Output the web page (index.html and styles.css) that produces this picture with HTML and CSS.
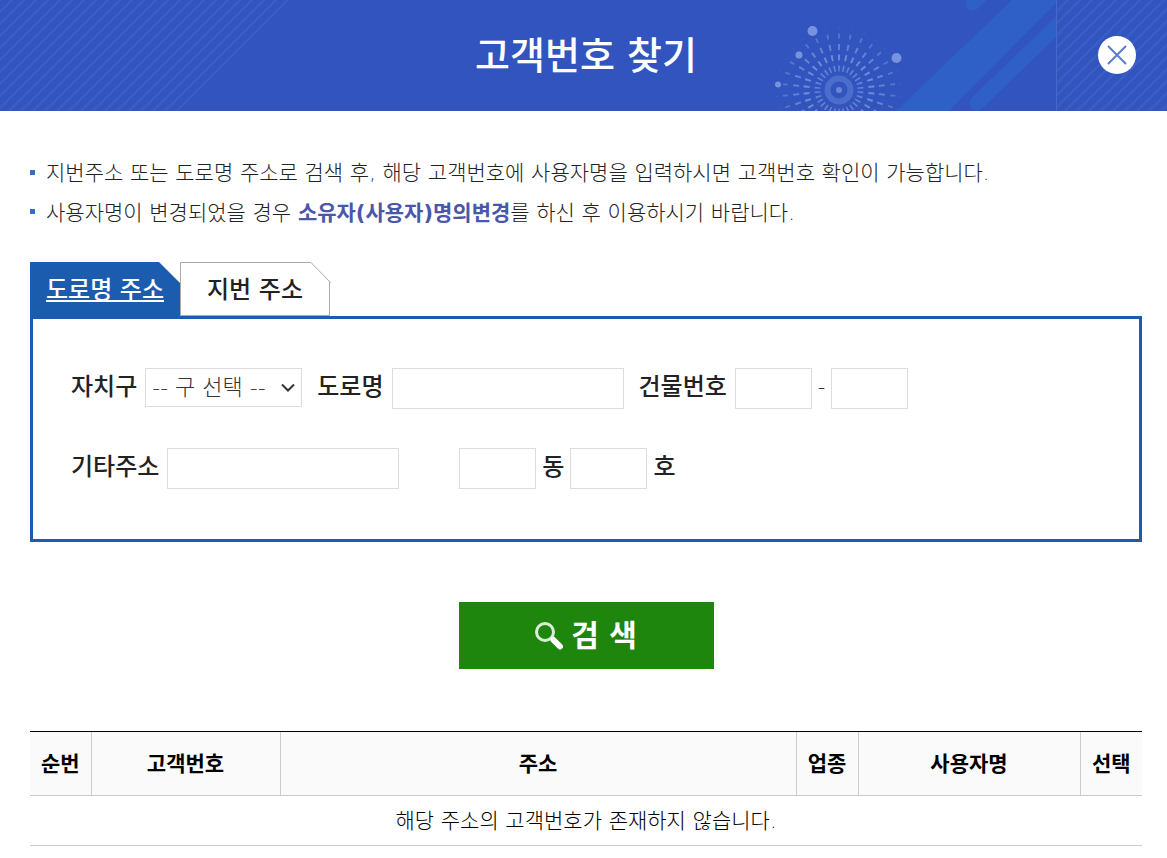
FILE: index.html
```html
<!DOCTYPE html>
<html lang="ko">
<head>
<meta charset="utf-8">
<title>고객번호 찾기</title>
<link rel="stylesheet" href="styles.css">
</head>
<body>
<header class="banner">
  <svg class="art art-left" width="300" height="111" viewBox="0 0 300 111" aria-hidden="true">
    <defs>
      <pattern id="stripes" width="12" height="12" patternUnits="userSpaceOnUse">
        <path d="M-3 3L3 -3M-3 15L15 -3M9 15L15 9" stroke="#395dc4" stroke-width="2.500"/>
      </pattern>
    </defs>
    <path d="M0 0H289L178 111H0z" fill="url(#stripes)"/>
  </svg>
  <svg class="art art-right" width="427" height="111" viewBox="740 0 427 111" aria-hidden="true">
    <path d="M1012 0H1056V3L949 111H896z" fill="#2f60c8"/>
    <path d="M977 103L1066 17M973 3L985 -9" stroke="#2f60c8" stroke-width="15" stroke-linecap="round"/>
    <path d="M1057 0H1167V111H1057z" fill="#3154be"/>
    <path d="M1057 0H1167V111H1057z" fill="url(#stripes)"/>
    <path d="M1056.500 0V111" stroke="#4469c9"/>
    <g fill="none" stroke="#7c97dd" transform="rotate(-90 839 90)">
      <circle cx="839" cy="90" r="11.500" stroke-width="6" stroke="#4b6dcb"/>
      <circle cx="839" cy="90" r="21.500" stroke-width="6" pathLength="300" stroke-dasharray="3.500 6.500" stroke-dashoffset="1.750" opacity=".7"/>
      <circle cx="839" cy="90" r="32.500" stroke-width="6" pathLength="300" stroke-dasharray="3 7" stroke-dashoffset="1.500" opacity=".8"/>
      <circle cx="839" cy="90" r="43" stroke-width="6" pathLength="300" stroke-dasharray="2.200 7.800" stroke-dashoffset="1.100" opacity=".7"/>
      <circle cx="839" cy="90" r="54" stroke-width="5" pathLength="300" stroke-dasharray="1.700 8.300" stroke-dashoffset=".85" opacity=".5"/>
      <circle cx="839" cy="90" r="62" stroke-width="3" pathLength="300" stroke-dasharray="1 9" stroke-dashoffset=".5" opacity=".12"/>
    </g>
    <g fill="#7893de">
      <circle cx="839" cy="90" r="3" fill="#6885d6"/>
      <circle cx="812.500" cy="31" r="5"/>
      <circle cx="799" cy="55" r="3.500"/>
      <circle cx="896.500" cy="58" r="5"/>
      <circle cx="778" cy="84.500" r="3"/>
    </g>
  </svg>
  <h1 class="title">고객번호 찾기</h1>
  <button class="close" type="button" aria-label="닫기">
    <svg width="38" height="38" viewBox="0 0 38 38" aria-hidden="true"><path d="M10 10L28 28M28 10L10 28" stroke="#5b7cc6" stroke-width="2"/></svg>
  </button>
</header>

<main class="content">
  <ul class="notes">
    <li>지번주소 또는 도로명 주소로 검색 후, 해당 고객번호에 사용자명을 입력하시면 고객번호 확인이 가능합니다.</li>
    <li>사용자명이 변경되었을 경우 <strong>소유자(사용자)명의변경</strong>를 하신 후 이용하시기 바랍니다.</li>
  </ul>

  <nav class="tabs">
    <a class="tab tab-active" href="#road">도로명 주소</a>
    <a class="tab tab-plain" href="#lot">
      <svg class="tab-shape" width="151" height="54" viewBox="0 0 151 54" aria-hidden="true"><path d="M.5 54V.5H131L150.500 20.500H149.500V53.500H.5" fill="#fff" stroke="#aaa"/></svg>
      <span class="tab-text">지번 주소</span>
    </a>
  </nav>

  <form class="search" id="road">
    <div class="panel">
      <div class="row">
        <div class="field">
          <label for="gu">자치구</label>
          <span class="select-box">
            <select id="gu"><option>-- 구 선택 --</option></select>
            <svg class="chevron" width="14" height="10" viewBox="0 0 14 10" aria-hidden="true"><path d="M1 1.500L7 7.500L13 1.500" fill="none" stroke="#333" stroke-width="2"/></svg>
          </span>
        </div>
        <div class="field">
          <label for="street">도로명</label>
          <input class="wide" id="street" type="text">
        </div>
        <div class="field">
          <label for="bldg">건물번호</label>
          <input class="short" id="bldg" type="text">
          <span class="dash">-</span>
          <input class="short" type="text" aria-label="건물번호 부번">
        </div>
      </div>
      <div class="row row-etc">
        <div class="field">
          <label for="etc">기타주소</label>
          <input class="wide" id="etc" type="text">
        </div>
        <div class="field">
          <input class="short" id="dong" type="text">
          <label for="dong">동</label>
          <input class="short" id="ho" type="text">
          <label for="ho">호</label>
        </div>
      </div>
    </div>
    <button class="submit" type="button">
      <svg width="28" height="28" viewBox="0 0 28 28" aria-hidden="true">
        <circle cx="10" cy="10" r="8.500" fill="none" stroke="#d9efd5" stroke-width="3"/>
        <path d="M15.500 15.500L19 19" stroke="#d9efd5" stroke-width="3"/>
        <path d="M18.500 18L25 24.500" stroke="#fff" stroke-width="6" stroke-linecap="round"/>
      </svg>
      <span class="submit-text">검 색</span>
    </button>
  </form>

  <table class="results">
    <colgroup><col class="c-no"><col class="c-id"><col><col class="c-type"><col class="c-user"><col class="c-pick"></colgroup>
    <thead>
      <tr><th>순번</th><th>고객번호</th><th>주소</th><th>업종</th><th>사용자명</th><th>선택</th></tr>
    </thead>
    <tbody>
      <tr><td colspan="6">해당 주소의 고객번호가 존재하지 않습니다.</td></tr>
    </tbody>
  </table>
</main>
</body>
</html>
```
FILE: styles.css
```css
* { box-sizing: border-box; }

body {
  margin: 0;
  background: #fff;
  color: #222;
  font-family: "DejaVu Sans", "Noto Sans CJK KR", sans-serif;
  font-size: 21px;
  font-weight: 300;
}

button, input, select { font: inherit; margin: 0; }

.banner {
  position: relative;
  display: flex;
  align-items: center;
  justify-content: center;
  height: 111px;
  padding-left: 5px;
  background: #3154be;
  overflow: hidden;
}
.art { position: absolute; top: 0; }
.art-left { left: 0; }
.art-right { right: 0; }
.title {
  position: relative;
  margin: 0;
  color: #fff;
  font-size: 38px;
  font-weight: 500;
  line-height: 54px;
}
.close {
  position: absolute;
  top: 36px;
  right: 31px;
  width: 38px;
  height: 38px;
  padding: 0;
  border: 0;
  border-radius: 50%;
  background: #fff;
}
.close svg { display: block; }

.content { padding: 43px 25px 12px 30px; }

.notes { margin: 0 0 29px; padding: 0; list-style: none; }
.notes li {
  padding-left: 16px;
  line-height: 39px;
  background: linear-gradient(#2f70c4, #2f70c4) 0 16px / 5px 5px no-repeat;
}
.notes li + li { padding-top: 1px; }
.notes strong { color: #4a56a8; font-weight: 700; }

.tabs { display: flex; }
.tab {
  position: relative;
  width: 150px;
  height: 54px;
  font-size: 24px;
  font-weight: 500;
  line-height: 56px;
  text-align: center;
  white-space: nowrap;
}
.tab-active {
  color: #fff;
  background: #1c5cae;
  clip-path: polygon(0 0, 129px 0, 100% 21px, 100% 100%, 0 100%);
}
.tab-plain { color: #222; text-decoration: none; }
.tab-shape { position: absolute; top: 0; left: 0; }
.tab-text { position: relative; }

.search { display: flex; flex-direction: column; align-items: center; }
.panel {
  align-self: stretch;
  display: flex;
  flex-direction: column;
  gap: 39px;
  padding: 49px 38px 50px;
  border: 3px solid #1c5cae;
}
.row { display: flex; flex-wrap: wrap; gap: 15px; }
.row-etc { column-gap: 60px; }
.field { display: flex; gap: 6px; }
.field label {
  color: #222;
  font-size: 24px;
  font-weight: 500;
  line-height: 38px;
}
.field label:first-child { padding-right: 2px; }
.field input, .field select {
  border: 1px solid #ddd;
  border-radius: 0;
  background: #fff;
}
.field input { height: 41px; padding: 0 8px; }
.field .wide { width: 232px; }
.field .short { width: 77px; }
.select-box { position: relative; }
.field select {
  display: block;
  width: 157px;
  height: 39px;
  padding: 0 6px;
  color: #333;
  font-size: 22px;
  appearance: none;
}
.chevron {
  position: absolute;
  top: 15px;
  right: 7px;
  pointer-events: none;
}
.dash { line-height: 38px; color: #222; }

.submit {
  display: flex;
  align-items: center;
  justify-content: center;
  gap: 8px;
  width: 255px;
  height: 67px;
  margin: 60px 0 62px;
  padding: 0;
  border: 0;
  background: #1e850d;
  color: #fff;
  font-size: 30px;
  font-weight: 700;
}
.submit-text { padding-bottom: 6px; }

.results {
  width: 100%;
  border-collapse: collapse;
  table-layout: fixed;
  color: #000;
}
.c-no { width: 61px; }
.c-type, .c-pick { width: 62px; }
.c-id { width: 189px; }
.c-user { width: 222px; }
.results th {
  height: 64px;
  padding: 0 0 4px;
  border-top: 1px solid #000;
  border-bottom: 1px solid #ccc;
  background: #fafafa;
  font-weight: 700;
}
.results th + th { border-left: 1px solid #ccc; }
.results td {
  height: 50px;
  padding: 0 0 4px;
  border-bottom: 1px solid #ccc;
  text-align: center;
}
```
